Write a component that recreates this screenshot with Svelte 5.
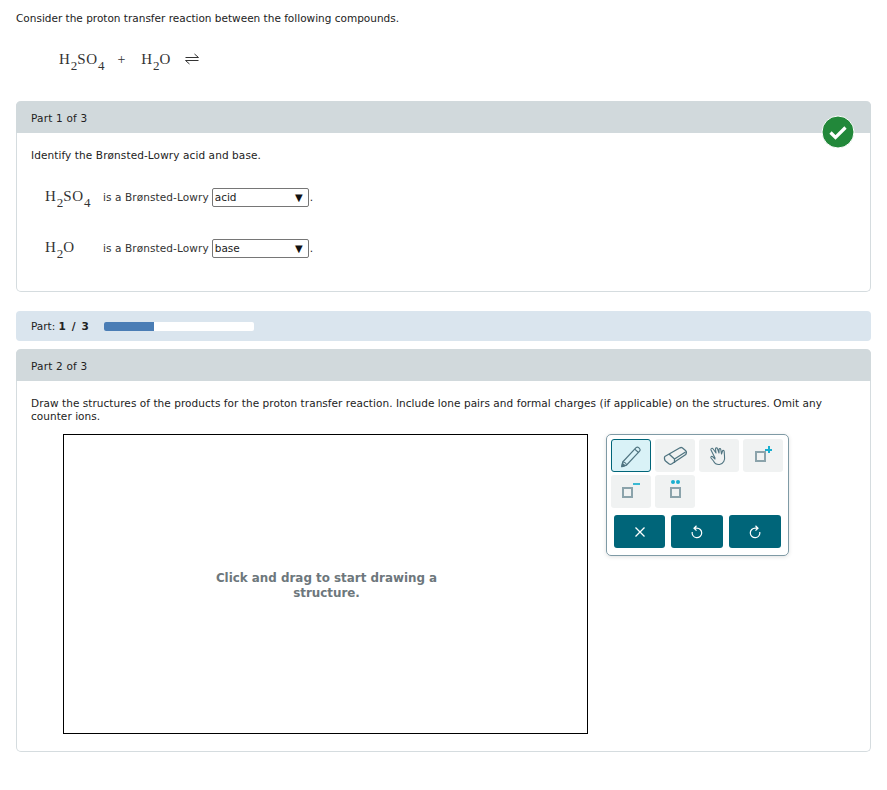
<script>
  let answers = [
    { formula: [['H'], ['2', 'sub'], ['SO'], ['4', 'sub']], value: 'acid' },
    { formula: [['H'], ['2', 'sub'], ['O']], value: 'base' }
  ]
</script>

{#snippet formula(parts)}
  <span class="chem">
    {#each parts as part}
      {#if part[1]}<sub>{part[0]}</sub>{:else}{part[0]}{/if}
    {/each}
  </span>
{/snippet}

<main class="page">
  <p class="intro">Consider the proton transfer reaction between the following compounds.</p>

  <div class="reaction">
    {@render formula([['H'], ['2', 'sub'], ['SO'], ['4', 'sub']])}
    <span class="plus">+</span>
    {@render formula([['H'], ['2', 'sub'], ['O']])}
    <svg class="equilibrium" width="14" height="12" viewBox="0 0 14 12" fill="none" stroke="#333" stroke-width="1">
      <path d="M.5 4.500h13l-4-3.500" />
      <path d="M13.500 7.500H.5l4 3.500" />
    </svg>
  </div>

  <section class="panel">
    <header class="panel-head">Part 1 of 3</header>
    <div class="check">
      <svg width="34" height="34" viewBox="0 0 34 34">
        <circle cx="17" cy="17" r="16" fill="#22883a" stroke="#fff" stroke-width="1" />
        <path d="M9.500 17.500l5 5 10-10" fill="none" stroke="#fff" stroke-width="3.200" />
      </svg>
    </div>
    <div class="panel-body first">
      <p>Identify the Brønsted-Lowry acid and base.</p>
      {#each answers as row}
        <div class="answer">
          <span class="answer-chem">{@render formula(row.formula)}</span>
          <span class="answer-text">is a Brønsted-Lowry</span>
          <span class="select-wrap">
            <select bind:value={row.value}>
              <option>acid</option>
              <option>base</option>
            </select>
            <span class="arrow">▼</span>
          </span>
          <span class="dot">.</span>
        </div>
      {/each}
    </div>
  </section>

  <div class="progress">
    <span class="progress-label">Part: <b>1 / 3</b></span>
    <div class="track"><div class="fill"></div></div>
  </div>

  <section class="panel">
    <header class="panel-head">Part 2 of 3</header>
    <div class="panel-body second">
      <p>Draw the structures of the products for the proton transfer reaction. Include lone pairs and formal charges (if applicable) on the structures. Omit any counter ions.</p>
      <div class="workspace">
        <div class="canvas"><strong>Click and drag to start drawing a structure.</strong></div>
        <div class="toolbox">
          <div class="tools">
            <button class="tool active" aria-label="Draw">
              <svg width="24" height="24" viewBox="0 0 26 26" fill="none" stroke="#4f7480" stroke-width="1.300" stroke-linejoin="round">
                <path d="M4 19.500L18.500 4a2 2 0 0 1 2.800 0l1 1a2 2 0 0 1 0 2.800L8 23l-5 1.500z" />
                <path d="M4 19.500c2 0 4 1.500 4 3.500M17 5.500l4.500 4" />
                <path d="M3 24.500l.8-3.500 2.700 2.500z" fill="#4f7480" />
              </svg>
            </button>
            <button class="tool" aria-label="Erase">
              <svg width="25" height="20" viewBox="0 0 25 20" fill="none" stroke="#4f7480" stroke-width="1.300" stroke-linejoin="round">
                <path d="M1.800 10.500L17 1.800c.8-.4 1.500-.4 2.200 0l3.300 2.700c1 .8 1 2.600.3 4L8.500 18c-.8.5-1.800.4-2.600-.2L2.500 15c-1-1-1.400-3.400-.7-4.500z" />
                <path d="M6 8l5.500 5v4M11.500 13l11-7" />
              </svg>
            </button>
            <button class="tool" aria-label="Move">
              <svg width="26" height="26" viewBox="0 0 26 26" fill="none" stroke="#4f7480" stroke-width="1.100" stroke-linecap="round" stroke-linejoin="round">
                <path d="M9 15L5 7c-.6-1.500 1.300-2.500 2.200-1L10 10l-.5-4c-.1-1.300 1.600-1.600 2-.3L13 10l0-3.500c.1-1.200 1.600-1.200 1.800 0L15.500 11l1-3c.4-1 1.800-.6 1.700.6l.3 4.400c.7 4-1 8-5 8.500-3 .3-5-1.500-6-3.500L5 15c-.6-1.200.8-2.200 1.800-1.200L9 16" />
              </svg>
            </button>
            <button class="tool" aria-label="Increase charge">
              <span class="box plus-box"></span>
              <span class="mark-plus"></span>
            </button>
            <button class="tool" aria-label="Decrease charge">
              <span class="box minus-box"></span>
              <span class="mark-minus"></span>
            </button>
            <button class="tool" aria-label="Lone pair">
              <span class="box pair-box"></span>
              <span class="mark-dots"></span>
            </button>
          </div>
          <div class="actions">
            <button class="action" aria-label="Clear">
              <svg width="12" height="12" viewBox="0 0 12 12" stroke="#fff" stroke-width="1.300" fill="none"><path d="M1.500 1.500l9 9M10.500 1.500l-9 9" /></svg>
            </button>
            <button class="action" aria-label="Undo">
              <svg width="12" height="14" viewBox="0 0 12 14" stroke="#fff" stroke-width="1.200" fill="none"><path d="M5.500 .8L3 3.200l2.500 2.400M3.200 3.200c.8-.2 1.600-.2 2.500-.1a4.800 4.800 0 1 1-4.500 3.900" /></svg>
            </button>
            <button class="action" aria-label="Redo">
              <svg width="12" height="14" viewBox="0 0 12 14" stroke="#fff" stroke-width="1.200" fill="none"><path d="M6.500 .8L9 3.200 6.500 5.600M8.800 3.200c-.8-.2-1.600-.2-2.500-.1a4.800 4.800 0 1 0 4.500 3.900" /></svg>
            </button>
          </div>
        </div>
      </div>
    </div>
  </section>
</main>

<style>
  :global(body) {
    margin: 0;
    background: #fff;
  }

  .page {
    padding: 11px 16px 38px;
    font-family: "DejaVu Sans", Verdana, sans-serif;
    font-size: 10.500px;
    line-height: 14px;
    color: #222;
  }

  p {
    margin: 0;
  }

  .reaction {
    display: flex;
    align-items: center;
    margin: 19px 0 27px 43px;
    height: 30px;
  }

  .chem {
    font-family: "Liberation Serif", "Times New Roman", serif;
    font-size: 15px;
    letter-spacing: 0.800px;
    color: #333;
    white-space: nowrap;
  }

  .chem sub {
    font-size: 13px;
    line-height: 0;
    vertical-align: -6px;
    letter-spacing: 0;
  }

  .plus {
    font-family: "Liberation Serif", serif;
    font-size: 14px;
    margin: 2px 16px 0 13px;
    color: #333;
  }

  .equilibrium {
    margin-left: 14px;
  }

  .panel {
    position: relative;
    border: 1px solid #d5dcdf;
    border-top: 0;
    border-radius: 5px;
  }

  .panel-head {
    box-sizing: border-box;
    height: 32px;
    margin: 0 -1px;
    padding: 1px 15px 0;
    display: flex;
    align-items: center;
    letter-spacing: 0.200px;
    background: #d1d9dc;
    border-radius: 5px 5px 0 0;
  }

  .check {
    position: absolute;
    right: 15px;
    top: 14px;
    width: 34px;
    height: 34px;
  }

  .panel-body {
    padding: 0 14px;
  }

  .first {
    height: 143px;
    padding-top: 15px;
    letter-spacing: 0.100px;
  }

  .answer {
    display: flex;
    align-items: center;
    height: 20px;
    margin: 25px 0 0 14px;
  }

  .answer + .answer {
    margin-top: 31px;
  }

  .answer-chem {
    width: 58px;
    margin-top: -2px;
  }

  .answer-text {
    color: #333;
    margin-right: 3px;
  }

  .select-wrap {
    position: relative;
    display: inline-block;
  }

  select {
    display: block;
    appearance: none;
    width: 97px;
    height: 19px;
    padding: 0 0 0 2px;
    border: 1px solid #767676;
    border-radius: 2px;
    background: #fff;
    font: 10.500px "DejaVu Sans", Verdana, sans-serif;
    color: #222;
  }

  .arrow {
    position: absolute;
    right: 6px;
    top: 3px;
    font-size: 10px;
    color: #111;
    pointer-events: none;
  }

  .dot {
    margin-left: 1px;
  }

  .progress {
    display: flex;
    align-items: center;
    height: 30px;
    margin: 19px 0 8px;
    padding: 0 15px;
    background: #dae5ee;
    border-radius: 4px;
  }

  .progress-label {
    width: 73px;
    flex: none;
  }

  .progress-label b {
    letter-spacing: 1.100px;
  }

  .track {
    width: 150px;
    height: 9px;
    background: #fff;
    border-radius: 2px;
    overflow: hidden;
  }

  .fill {
    width: 50px;
    height: 100%;
    background: #4a7db5;
  }

  .second {
    height: 354px;
    padding-top: 16px;
  }

  .second p {
    line-height: 13px;
    letter-spacing: 0.050px;
  }

  .workspace {
    display: flex;
    align-items: flex-start;
    gap: 18px;
    margin: 11px 0 0 32px;
  }

  .canvas {
    box-sizing: border-box;
    flex: none;
    width: 525px;
    height: 300px;
    border: 1px solid #000;
    display: flex;
    align-items: center;
    justify-content: center;
    text-align: center;
  }

  .canvas strong {
    width: 240px;
    font-size: 11.900px;
    line-height: 15px;
    color: #6d777c;
    margin: 3px 0 0 2px;
  }

  .toolbox {
    box-sizing: border-box;
    flex: none;
    width: 183px;
    height: 122px;
    padding: 4px 4px 0;
    border: 1px solid #7f9aa5;
    border-radius: 5px;
    box-shadow: 0 1px 4px rgba(0, 0, 0, 0.12);
  }

  .tools {
    display: grid;
    grid-template-columns: repeat(4, 40px);
    grid-auto-rows: 33px;
    gap: 3px 4px;
  }

  button {
    padding: 0;
    border: 0;
    font: inherit;
  }

  .tool {
    position: relative;
    display: flex;
    align-items: center;
    justify-content: center;
    background: #f0f2f2;
    border-radius: 3px;
  }

  .tool.active {
    background: #d9f2f7;
    border: 1px solid #006579;
  }

  .box {
    position: absolute;
    box-sizing: border-box;
    width: 11px;
    height: 11px;
    border: 2px solid #8ba3ab;
  }

  .plus-box {
    left: 12px;
    top: 12px;
  }

  .minus-box {
    left: 11px;
    top: 12px;
  }

  .pair-box {
    left: 15px;
    top: 12px;
  }

  .mark-plus {
    position: absolute;
    left: 22px;
    top: 7px;
    width: 7px;
    height: 7px;
    background:
      linear-gradient(#19afd0, #19afd0) center / 100% 2px no-repeat,
      linear-gradient(#19afd0, #19afd0) center / 2px 100% no-repeat;
  }

  .mark-minus {
    position: absolute;
    left: 22px;
    top: 8px;
    width: 7px;
    height: 2px;
    background: #3cb9d3;
  }

  .mark-dots {
    position: absolute;
    left: 16px;
    top: 5px;
    width: 4px;
    height: 4px;
    border-radius: 50%;
    background: #19afd0;
    box-shadow: 5px 0 0 #19afd0;
  }

  .actions {
    display: grid;
    grid-template-columns: 51px 52px 52px;
    gap: 6px;
    margin: 7px 0 0 3px;
  }

  .action {
    display: flex;
    align-items: center;
    justify-content: center;
    height: 33px;
    background: #006579;
    border-radius: 3px;
  }
</style>
